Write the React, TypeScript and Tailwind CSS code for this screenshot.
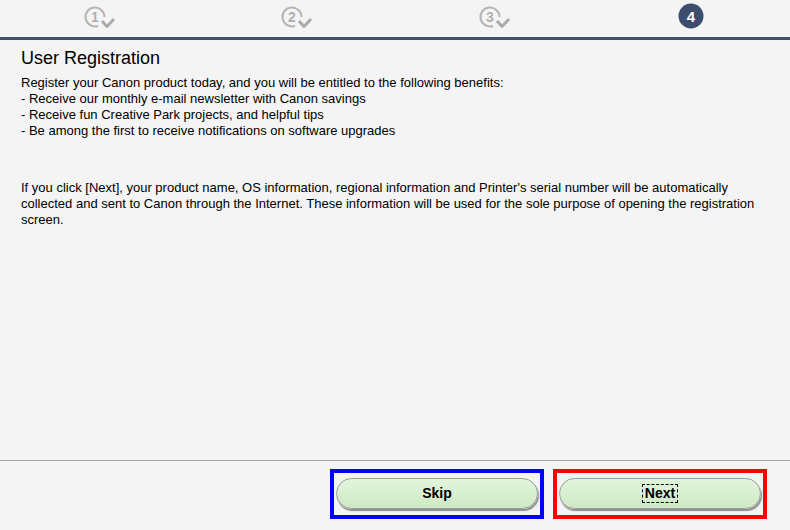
import React from 'react';

const steps = [1, 2, 3];

function DoneStep({ n }: { n: number }) {
  return (
    <svg width="34" height="30" viewBox="0 0 34 30">
      <path
        d="M 22.5 15 A 9.5 9.5 0 1 0 16 24"
        fill="none"
        stroke="#b4b4b4"
        strokeWidth="2"
      />
      <text
        x="13"
        y="20"
        textAnchor="middle"
        fontSize="14"
        fontWeight="bold"
        fill="#b0b0b0"
        fontFamily="'Liberation Sans', Arial, sans-serif"
      >
        {n}
      </text>
      <path d="M 20 19 L 25 24.5 L 32 17" fill="none" stroke="#ababab" strokeWidth="3" strokeLinejoin="round" />
    </svg>
  );
}

function CurrentStep({ n }: { n: number }) {
  return (
    <svg width="26" height="26" viewBox="0 0 26 26">
      <circle cx="13" cy="13" r="12.5" fill="#3c4d6e" />
      <text
        x="13"
        y="18.5"
        textAnchor="middle"
        fontSize="15"
        fontWeight="bold"
        fill="#ffffff"
        fontFamily="'Liberation Sans', Arial, sans-serif"
      >
        {n}
      </text>
    </svg>
  );
}

function PillButton({ label, focused, outline }: { label: string; focused?: boolean; outline: string }) {
  return (
    <div className={`h-[50px] w-[214px] border-4 ${outline} px-[2px] pt-[5px]`}>
      <button className="flex h-[31px] w-full items-center justify-center rounded-full border border-[#9c9c9c] bg-gradient-to-b from-[#e2f5dc] to-[#cdeac4] shadow-[1px_2px_1px_#8c8c8c]">
        <span
          className={`px-[2px] text-[14px] leading-[17px] font-bold text-black ${focused ? 'border border-dashed border-black' : ''}`}
        >
          {label}
        </span>
      </button>
    </div>
  );
}

export default function App() {
  return (
    <div className="flex h-[530px] w-[790px] flex-col bg-[#f4f4f4] font-['Liberation_Sans',Arial,sans-serif] text-black">
      <div className="flex h-[37px] shrink-0">
        {steps.map((n) => (
          <div key={n} className="flex flex-1 items-start justify-center pt-[2px]">
            <DoneStep n={n} />
          </div>
        ))}
        <div className="flex flex-1 items-start justify-center pt-[3px]">
          <CurrentStep n={4} />
        </div>
      </div>
      <div className="h-[3px] shrink-0 bg-[#42506e]" />

      <main className="flex-1 px-[21px] pt-[8px]">
        <h1 className="text-[18px] leading-[20px]">User Registration</h1>
        <div className="mt-[7px] text-[13px] leading-[16px]">
          <p>Register your Canon product today, and you will be entitled to the following benefits:</p>
          <p>- Receive our monthly e-mail newsletter with Canon savings</p>
          <p>- Receive fun Creative Park projects, and helpful tips</p>
          <p>- Be among the first to receive notifications on software upgrades</p>
        </div>
        <p className="mt-[41px] pr-[4px] text-[13px] leading-[16px]">
          If you click [Next], your product name, OS information, regional information and Printer&apos;s serial number will be
          automatically collected and sent to Canon through the Internet. These information will be used for the sole purpose of
          opening the registration screen.
        </p>
      </main>

      <div className="h-px shrink-0 bg-[#a4a4a4]" />
      <footer className="flex h-[69px] shrink-0 justify-end gap-[9px] pt-[8px] pr-[23px]">
        <PillButton label="Skip" outline="border-[#0000ff]" />
        <PillButton label="Next" focused outline="border-[#ff0000]" />
      </footer>
    </div>
  );
}
